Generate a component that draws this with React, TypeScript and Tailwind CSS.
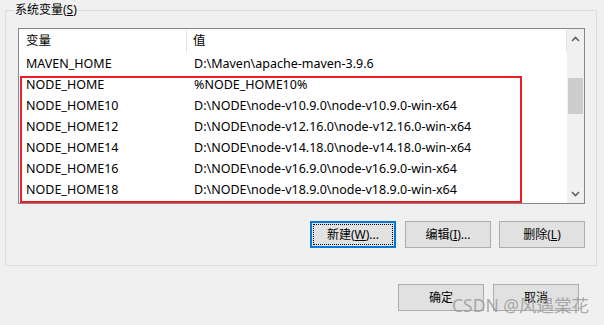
import React from "react";

const rows: [string, string][] = [
  ["MAVEN_HOME", "D:\\Maven\\apache-maven-3.9.6"],
  ["NODE_HOME", "%NODE_HOME10%"],
  ["NODE_HOME10", "D:\\NODE\\node-v10.9.0\\node-v10.9.0-win-x64"],
  ["NODE_HOME12", "D:\\NODE\\node-v12.16.0\\node-v12.16.0-win-x64"],
  ["NODE_HOME14", "D:\\NODE\\node-v14.18.0\\node-v14.18.0-win-x64"],
  ["NODE_HOME16", "D:\\NODE\\node-v16.9.0\\node-v16.9.0-win-x64"],
  ["NODE_HOME18", "D:\\NODE\\node-v18.9.0\\node-v18.9.0-win-x64"],
];

const font = "font-['Noto_Sans','Noto_Sans_CJK_SC',sans-serif]";

function Btn({ children, focus }: { children: React.ReactNode; focus?: boolean }) {
  return (
    <div
      className={
        "w-[86px] h-[27px] flex items-center justify-center bg-[#e1e1e1] text-[12px] text-black " +
        (focus ? "border-2 border-[#0078d7] p-[1px]" : "border border-[#adadad]")
      }
    >
      {focus ? (
        <div className="w-full h-full border border-dotted border-black flex items-center justify-center">
          {children}
        </div>
      ) : (
        children
      )}
    </div>
  );
}

export default function App() {
  return (
    <div className={"w-[604px] h-[325px] bg-[#f0f0f0] relative overflow-hidden text-[12px] text-black " + font}>
      <div className="pt-[10px] pl-[5px]">
        <div className="relative w-[592px] h-[256px] border border-[#dcdcdc] pt-[17px] pl-[12px]">
          <div className="absolute -top-[10px] left-[8px] bg-[#f0f0f0] px-[1px] leading-[18px]">
            系统变量(<span className="underline">S</span>)
          </div>
          <div className="relative w-[567px] h-[176px] border border-[#828790] bg-white flex">
            <div className="flex-1 flex flex-col text-[12.5px]">
              <div className="h-[25px] flex items-stretch">
                <div className="w-[168px] border-r border-[#e5e5e5] flex items-center pl-[7px] my-[1px]">变量</div>
                <div className="flex-1 border-r border-[#e5e5e5] flex items-center pl-[6px] my-[1px]">值</div>
              </div>
              {rows.map(([k, v]) => (
                <div key={k} className="h-[21px] flex items-center">
                  <div className="w-[168px] pl-[7px]">{k}</div>
                  <div className="pl-[7px] whitespace-nowrap">{v}</div>
                </div>
              ))}
            </div>
            <div className="w-[17px] bg-[#f0f0f0] flex flex-col items-stretch">
              <div className="h-[17px] flex items-center justify-center mt-[1px]">
                <svg width="9" height="6" viewBox="0 0 9 6">
                  <path d="M1 5 L4.5 1.5 L8 5" stroke="#606060" strokeWidth="1.6" fill="none" />
                </svg>
              </div>
              <div className="h-[31px]" />
              <div className="h-[36px] bg-[#cdcdcd] mx-[1px]" />
              <div className="flex-1" />
              <div className="h-[17px] flex items-center justify-center mb-[1px]">
                <svg width="9" height="6" viewBox="0 0 9 6">
                  <path d="M1 1 L4.5 4.5 L8 1" stroke="#606060" strokeWidth="1.6" fill="none" />
                </svg>
              </div>
            </div>
            <div className="absolute left-[1px] top-[47px] w-[502px] h-[127px] border-2 border-[#ee1c25] pointer-events-none" />
          </div>
          <div className="flex justify-end gap-[8px] pr-[11px] mt-[17px]">
            <div className="mr-[1px]">
              <Btn focus>
                新建(<span className="underline">W</span>)...
              </Btn>
            </div>
            <Btn>
              编辑(<span className="underline">I</span>)...
            </Btn>
            <Btn>
              删除(<span className="underline">L</span>)
            </Btn>
          </div>
        </div>
      </div>
      <div className="flex justify-end gap-[9px] pr-[25px] mt-[18px]">
        <Btn>确定</Btn>
        <Btn>取消</Btn>
      </div>
      <div className="absolute left-[452px] top-[294px] text-[17.5px] text-[#a0a0a0]/90 leading-[22px] font-['Noto_Sans','Noto_Sans_CJK_SC',sans-serif] whitespace-nowrap">
        CSDN @风遇棠花
      </div>
    </div>
  );
}
